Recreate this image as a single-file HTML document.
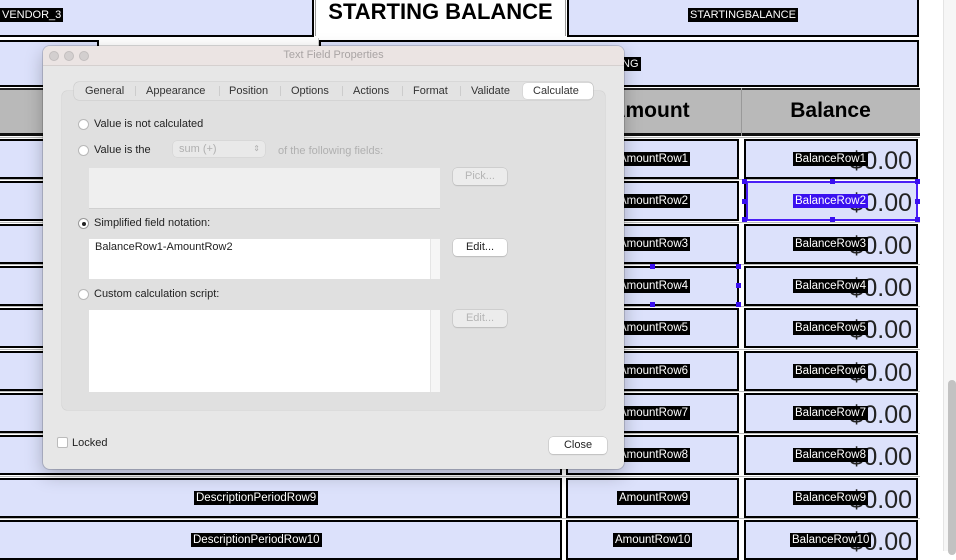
<!DOCTYPE html>
<html><head><meta charset="utf-8"><style>
*{box-sizing:border-box;margin:0;padding:0}
body{width:956px;height:551px;overflow:hidden;background:#fff;position:relative;font-family:"Liberation Sans",sans-serif}
.a{position:absolute}
.cell{position:absolute;background:#dce1fb;border:2px solid #000}
.lbl{position:absolute;background:#000;color:#fff;font-size:11px;line-height:14px;padding:0 2px;white-space:nowrap}
.money{position:absolute;font-family:"Liberation Sans",sans-serif;font-size:25px;color:#222;right:4px;top:6px;font-weight:300}
.hl{position:absolute;height:1px;background:#bbb}
.dlg{position:absolute;left:43px;top:46px;width:581px;height:423px;background:#e7e7e7;border-radius:7px;box-shadow:0 0 0 1px rgba(0,0,0,.15),0 6px 18px rgba(0,0,0,.25);overflow:hidden}
.tb{position:absolute;left:0;top:0;width:100%;height:20px;background:#ebe4e3;border-bottom:1px solid #d5d0cf;text-align:center;font-size:11px;color:#a9a4a4;line-height:19px}
.dot{position:absolute;top:5px;width:10px;height:10px;border-radius:50%;background:#d3cfcf;border:1px solid #c2bebe}
.txt{position:absolute;font-size:11px;color:#222;white-space:nowrap}
.rad{position:absolute;width:11px;height:11px;border-radius:50%;background:#fff;border:1px solid #b8b8b8}
.btn{position:absolute;width:54px;height:17px;background:#fff;border-radius:4px;box-shadow:0 0 0 .5px #bbb,0 1px 1px rgba(0,0,0,.15);font-size:11px;text-align:center;line-height:17px;color:#222}
.btn.dis{background:#ececec;color:#b5b5b5}
.tabs{position:absolute;left:31px;top:36px;width:519px;height:18px;background:#e3e3e3;border-radius:5px;box-shadow:0 0 0 .5px #c8c8c8;font-size:11px;color:#333}
.tabs span{position:absolute;top:3px}
.sep{position:absolute;top:4px;width:1px;height:10px;background:#ccc}
</style></head><body>
<div class="cell" style="left:-3px;top:-3px;width:317px;height:40px"></div>
<div class="lbl" style="left:0;top:8px">VENDOR_3</div>
<div class="a" style="left:315px;top:-2px;width:251px;height:38px;background:#fff;border-left:1px solid #999;border-right:1px solid #999;font-weight:bold;font-size:22px;text-align:center;line-height:28px">STARTING BALANCE</div>
<div class="cell" style="left:567px;top:-3px;width:352px;height:40px"></div>
<div class="lbl" style="left:688px;top:8px">STARTINGBALANCE</div>
<div class="cell" style="left:-3px;top:40px;width:102px;height:47px"></div>
<div class="a" style="left:100px;top:38px;width:219px;height:50px;background:#fff;border-right:1px solid #ccc"></div>
<div class="cell" style="left:319px;top:40px;width:600px;height:47px"></div>
<div class="lbl" style="left:620px;top:57px">NG</div>
<div class="a" style="left:0;top:88px;width:920px;height:48px;background:#b9b9b9;border-top:2px solid #222;border-bottom:3px solid #111"></div>
<div class="a" style="left:741px;top:88px;width:1px;height:48px;background:#999"></div>
<div class="a" style="left:560px;top:99px;width:180px;text-align:center;font-weight:bold;font-size:21px">Amount</div>
<div class="a" style="left:742px;top:99px;width:177px;text-align:center;font-weight:bold;font-size:21px">Balance</div>
<div id="rows"></div>
<script>
var h='';
for(var i=0;i<10;i++){
 var t=Math.round(139+42.35*i);
 h+='<div class="hl" style="left:0;top:'+(t-2)+'px;width:920px"></div>';
 h+='<div class="cell" style="left:-3px;top:'+t+'px;width:565px;height:40px"></div>';
 h+='<div class="cell" style="left:566px;top:'+t+'px;width:173px;height:40px"></div>';
 h+='<div class="cell" style="left:744px;top:'+t+'px;width:174px;height:40px"><span class="money">$0.00</span></div>';
 var n=i+1;
 h+='<div class="lbl" style="left:'+(n<10?194:191)+'px;top:'+(t+13)+'px;font-size:11.5px">DescriptionPeriodRow'+n+'</div>';
 h+='<div class="lbl" style="left:'+(n<10?617:613)+'px;top:'+(t+13)+'px;font-size:11.5px">AmountRow'+n+'</div>';
 h+='<div class="lbl" style="left:'+(n<10?793:790)+'px;top:'+(t+13)+'px;font-size:11.5px;'+(n==2?'background:#3a10f0':'')+'">BalanceRow'+n+'</div>';
}
document.getElementById('rows').innerHTML=h;
</script>
<div class="a" style="left:746px;top:181px;width:172px;height:40px;border:2px solid #4a1ef5"></div>
<div class="a" style="left:742px;top:179px;width:5px;height:5px;background:#3a10f0"></div>
<div class="a" style="left:830px;top:179px;width:5px;height:5px;background:#3a10f0"></div>
<div class="a" style="left:915px;top:179px;width:5px;height:5px;background:#3a10f0"></div>
<div class="a" style="left:742px;top:199px;width:5px;height:5px;background:#3a10f0"></div>
<div class="a" style="left:915px;top:199px;width:5px;height:5px;background:#3a10f0"></div>
<div class="a" style="left:742px;top:217px;width:5px;height:5px;background:#3a10f0"></div>
<div class="a" style="left:830px;top:217px;width:5px;height:5px;background:#3a10f0"></div>
<div class="a" style="left:915px;top:217px;width:5px;height:5px;background:#3a10f0"></div>
<div class="a" style="left:650px;top:264px;width:5px;height:5px;background:#3a10f0"></div>
<div class="a" style="left:736px;top:264px;width:5px;height:5px;background:#3a10f0"></div>
<div class="a" style="left:736px;top:283px;width:5px;height:5px;background:#3a10f0"></div>
<div class="a" style="left:736px;top:302px;width:5px;height:5px;background:#3a10f0"></div>
<div class="a" style="left:650px;top:302px;width:5px;height:5px;background:#3a10f0"></div>
<div class="a" style="left:920px;top:0;width:23px;height:551px;background:#fff"></div>
<div class="a" style="left:943px;top:0;width:13px;height:551px;background:#f6f6f6;border-left:1px solid #e4e4e4"></div>
<div class="a" style="left:948px;top:380px;width:8px;height:175px;background:#c2c2c2;border-radius:4px"></div>
<div class="dlg">
 <div class="tb">Text Field Properties</div>
 <div class="dot" style="left:6px"></div><div class="dot" style="left:21px"></div><div class="dot" style="left:36px"></div>
 <div class="a" style="left:19px;top:45px;width:543px;height:319px;background:#e0e0e0;border-radius:5px;box-shadow:0 0 0 .5px #d0d0d0"></div>
 <div class="tabs">
  <span style="left:11px">General</span><div class="sep" style="left:61px"></div>
  <span style="left:72px">Appearance</span><div class="sep" style="left:145px"></div>
  <span style="left:155px">Position</span><div class="sep" style="left:206px"></div>
  <span style="left:217px">Options</span><div class="sep" style="left:268px"></div>
  <span style="left:279px">Actions</span><div class="sep" style="left:328px"></div>
  <span style="left:339px">Format</span><div class="sep" style="left:386px"></div>
  <span style="left:397px">Validate</span>
  <div class="a" style="left:449px;top:1px;width:70px;height:16px;background:#fff;border-radius:4px;box-shadow:0 0 1px rgba(0,0,0,.3)"></div>
  <span style="left:459px">Calculate</span>
 </div>
 <div class="rad" style="left:35px;top:73px"></div><div class="txt" style="left:51px;top:72px">Value is not calculated</div>
 <div class="rad" style="left:35px;top:99px"></div><div class="txt" style="left:51px;top:98px">Value is the</div>
 <div class="a" style="left:130px;top:95px;width:92px;height:16px;background:#e9e9e9;border-radius:4px;box-shadow:0 0 0 .5px #d0d0d0;font-size:11px;color:#b0b0b0;padding-left:6px;line-height:16px">sum (+)<span style="position:absolute;right:5px;font-size:8px">⇕</span></div>
 <div class="txt" style="left:235px;top:99px;color:#b0b0b0">of the following fields:</div>
 <div class="a" style="left:46px;top:122px;width:351px;height:41px;background:#efefef;border-bottom:1px solid #d0d0d0"></div>
 <div class="btn dis" style="left:410px;top:122px">Pick...</div>
 <div class="rad" style="left:35px;top:172px;border-color:#999"></div><div class="a" style="left:39px;top:176px;width:4px;height:4px;border-radius:50%;background:#222"></div>
 <div class="txt" style="left:51px;top:171px">Simplified field notation:</div>
 <div class="a" style="left:46px;top:193px;width:341px;height:40px;background:#fff"></div>
 <div class="a" style="left:387px;top:193px;width:10px;height:40px;background:#f6f6f6;border-left:1px solid #e5e5e5"></div>
 <div class="txt" style="left:52px;top:195px">BalanceRow1-AmountRow2</div>
 <div class="btn" style="left:410px;top:193px">Edit...</div>
 <div class="rad" style="left:35px;top:243px"></div><div class="txt" style="left:51px;top:242px">Custom calculation script:</div>
 <div class="a" style="left:46px;top:264px;width:341px;height:82px;background:#fff"></div>
 <div class="a" style="left:387px;top:264px;width:10px;height:82px;background:#f6f6f6;border-left:1px solid #e5e5e5"></div>
 <div class="btn dis" style="left:410px;top:264px">Edit...</div>
 <div class="a" style="left:14px;top:391px;width:11px;height:11px;background:#fff;border:1px solid #bbb;border-radius:2px"></div>
 <div class="txt" style="left:29px;top:391px">Locked</div>
 <div class="btn" style="left:506px;top:391px;width:58px">Close</div>
</div>
</body></html>
